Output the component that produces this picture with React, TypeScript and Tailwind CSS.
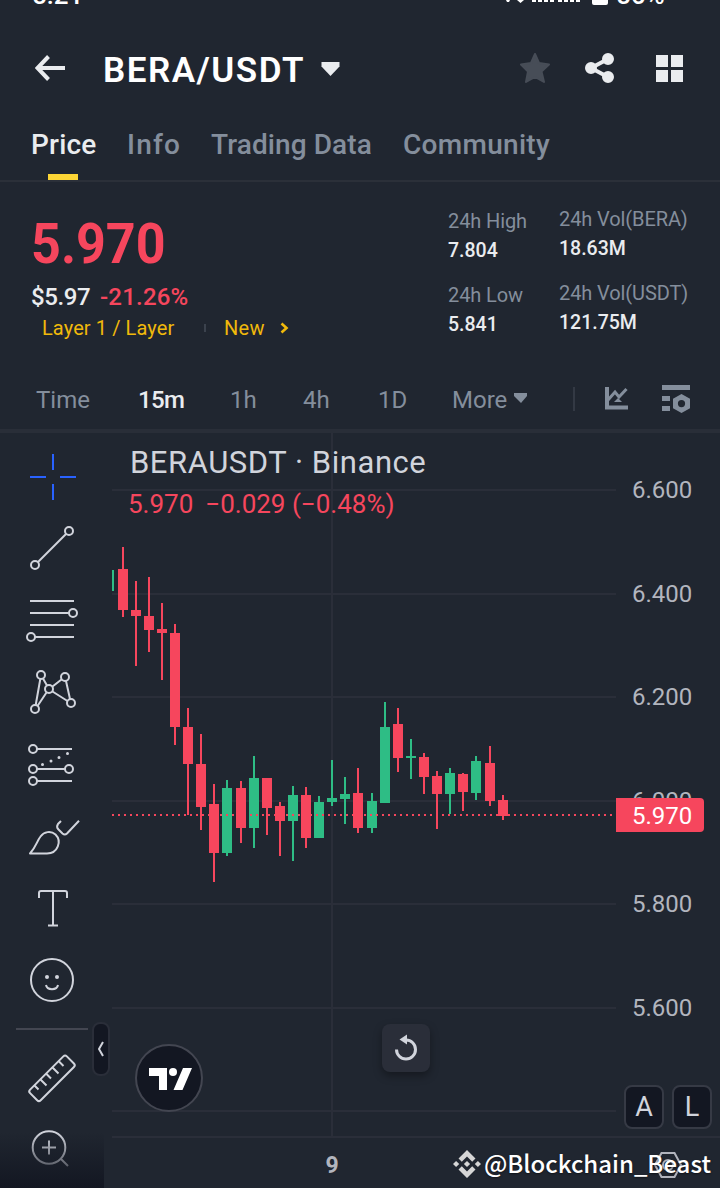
import type { ReactNode } from 'react';

type Candle = [x: number, high: number, open: number, close: number, low: number, up: boolean];

const RED = '#f6465d';
const GREEN = '#2ebd85';

// x centre, wick top, body top, body bottom, wick bottom, rising
const CANDLES: Candle[] = [
  [123, 547, 569, 610, 617, false],
  [136, 581, 610, 616, 666, false],
  [149, 577, 616, 630, 652, false],
  [162, 603, 629, 633, 680, false],
  [175, 624, 633, 727, 745, false],
  [188, 708, 727, 764, 815, false],
  [201, 734, 764, 807, 830, false],
  [214, 784, 804, 853, 882, false],
  [227, 780, 788, 853, 856, true],
  [241, 781, 788, 828, 843, false],
  [254, 756, 778, 828, 848, true],
  [267, 778, 778, 808, 835, false],
  [280, 802, 806, 821, 856, false],
  [293, 786, 795, 821, 861, true],
  [306, 787, 795, 838, 848, false],
  [319, 796, 802, 838, 838, true],
  [332, 760, 798, 802, 806, true],
  [345, 777, 794, 799, 824, true],
  [358, 768, 793, 828, 833, false],
  [372, 793, 801, 828, 833, true],
  [385, 702, 727, 803, 803, true],
  [398, 708, 724, 758, 772, false],
  [411, 739, 756, 758, 779, true],
  [424, 753, 757, 777, 794, false],
  [437, 771, 776, 794, 829, false],
  [450, 768, 773, 794, 814, true],
  [463, 773, 774, 792, 811, false],
  [476, 756, 761, 793, 800, true],
  [490, 746, 763, 801, 806, false],
  [503, 795, 800, 816, 820, false],
];

const GRID = [489, 593, 696, 800, 903, 1007, 1110];
const PRICES = ['6.600', '6.400', '6.200', '6.000', '5.800', '5.600'];

function Tool({ children }: { children: ReactNode }) {
  return (
    <svg width="72" height="72" viewBox="0 0 72 72" fill="none" stroke="#d1d4dc" strokeWidth="2" className="shrink-0">
      {children}
    </svg>
  );
}

function StatusBar() {
  return (
    <div className="h-3 overflow-hidden flex justify-between pl-8 pr-[53px] text-white font-medium">
      <span className="text-[26px] leading-none -mt-[18px]">5:21</span>
      <div className="flex">
        <svg width="110" height="12" viewBox="0 0 110 12" fill="#fff">
          <path d="M0 0h4l-1 2h-2zM11 0h7l-3.5 3z" />
          <path d="M26 0h4v2h-4zM32 0h4v2h-4zM38 0h4v2h-4zM44 0h4v2h-4zM52 0h4v2h-4zM58 0h4v2h-4zM64 0h4v2h-4zM70 0h4v2h-4z" />
          <path d="M86 0h16v3a2 2 0 0 1-2 2h-12a2 2 0 0 1-2-2z" />
        </svg>
        <span className="w-[51px] text-[26px] leading-none -mt-[18px]">56%</span>
      </div>
    </div>
  );
}

function Header() {
  return (
    <div className="h-[114px] flex items-center pl-[35px] pr-9 pb-0.5">
      <svg width="30" height="26" viewBox="0 0 30 26" fill="none" stroke="#eaecef" strokeWidth="4">
        <path d="M30 13H3M13.500 1.500L2.500 13l11 11.500" />
      </svg>
      <h1 className="ml-[38px] mt-[5px] w-[202px] text-white font-semibold text-[35px] leading-none tracking-[1.5px] whitespace-nowrap">BERA/USDT</h1>
      <svg className="ml-[16px] mt-px" width="19" height="14" viewBox="0 0 18 14" fill="#eaecef">
        <path d="M0 0h18v4.500L9 14 0 4.500z" />
      </svg>
      <svg className="ml-auto" width="30" height="30" viewBox="0 0 30 30" fill="#474d57" stroke="#474d57" strokeWidth="2" strokeLinejoin="round">
        <path d="M15 1l4 9 10 1.500-7.500 7L24 29l-9-5-9 5 2-10.500L1 11.500 11 10z" />
      </svg>
      <svg className="ml-[35px]" width="30" height="30" viewBox="0 0 30 30" fill="#eaecef" stroke="#eaecef" strokeWidth="4">
        <path d="M23 6L6 15l17 9" fill="none" />
        <circle cx="23" cy="6" r="4" />
        <circle cx="6" cy="15" r="4" />
        <circle cx="23" cy="24" r="4" />
      </svg>
      <div className="ml-[41px] mr-px grid grid-cols-2 gap-[3px]">
        <i className="size-3 bg-[#eaecef]" />
        <i className="size-3 bg-[#eaecef]" />
        <i className="size-3 bg-[#eaecef]" />
        <i className="size-3 bg-[#eaecef]" />
      </div>
    </div>
  );
}

function Tabs() {
  return (
    <nav className="h-14 pl-[31px] flex border-b-2 border-[#2b3039] text-[28px] leading-[38px] text-[#848e9c] font-medium whitespace-nowrap">
      <div className="w-24 flex flex-col text-[#eaecef]">
        <span className="tracking-[0.2px]">Price</span>
        <i className="mt-auto ml-[17px] w-[30px] h-1.5 bg-[#fcd535]" />
      </div>
      <span className="w-[84px] tracking-[1.2px]">Info</span>
      <span className="w-48 tracking-[0.1px]">Trading Data</span>
      <span className="tracking-[0.3px]">Community</span>
    </nav>
  );
}

function Stat({ label, value }: { label: string; value: string }) {
  return (
    <div className="h-[74px] whitespace-nowrap">
      <div className="text-[20px] leading-[29px] text-[#848e9c] tracking-[-0.1px]">{label}</div>
      <div className="text-[19.5px] leading-[29px] text-[#eaecef] font-medium">{value}</div>
    </div>
  );
}

function Summary() {
  return (
    <section className="h-[190px] flex pl-[31px]">
      <div className="w-[417px] pt-[30px] whitespace-nowrap">
        <div className="h-[69px] w-fit origin-left scale-x-[0.93] text-[56px] leading-[64px] text-[#f6465d] font-bold">5.970</div>
        <div className="h-8 flex items-center text-[24px] font-medium">
          <span className="w-[69px] text-[#eaecef] tracking-[-0.4px]">$5.97</span>
          <span className="text-[#f6465d] tracking-[0.2px]">-21.26%</span>
        </div>
        <div className="h-[30px] flex items-center pl-[11px] text-[20px] text-[#f0b90b]">
          <span className="w-[162px] tracking-[0.1px]">Layer 1 / Layer</span>
          <i className="w-0.5 h-2 bg-[#3b424d]" />
          <span className="ml-[18px] w-[56px] tracking-[0.3px]">New</span>
          <svg width="9" height="12" viewBox="0 0 9 12" fill="none" stroke="#f0b90b" strokeWidth="2.600">
            <path d="M1.500 1.500L6.500 6l-5 4.500" />
          </svg>
        </div>
      </div>
      <div className="w-[111px] pt-[25px]">
        <Stat label="24h High" value="7.804" />
        <Stat label="24h Low" value="5.841" />
      </div>
      <div className="pt-[23px]">
        <Stat label="24h Vol(BERA)" value="18.63M" />
        <Stat label="24h Vol(USDT)" value="121.75M" />
      </div>
    </section>
  );
}

function Intervals() {
  return (
    <div className="h-[61px] pl-9 pb-0.5 flex items-center border-b-4 border-[#292e38] text-[24px] text-[#848e9c] whitespace-nowrap">
      <span className="w-[102px]">Time</span>
      <span className="w-[92px] text-[#eaecef] font-medium tracking-[-0.6px]">15m</span>
      <span className="w-[73px]">1h</span>
      <span className="w-[75px]">4h</span>
      <span className="w-[74px]">1D</span>
      <span className="w-[62px]">More</span>
      <svg width="14" height="10" viewBox="0 0 14 10" fill="#848e9c" className="-mt-1">
        <path d="M1 0h12v3L7 10 0 3V0z" />
      </svg>
      <i className="ml-[45px] w-0.5 h-6 -mt-0.5 bg-[#333944]" />
      <svg className="ml-[30px] -mt-0.5" width="23" height="23" viewBox="0 0 23 23" fill="none" stroke="#848e9c">
        <path d="M2 0v20.500h21" strokeWidth="4" />
        <path d="M3 13L10 5l4 5 7.500-8" strokeWidth="3" />
        <path d="M9 15l4-4 4 4z" fill="#848e9c" stroke="none" />
      </svg>
      <svg className="ml-[34px]" width="28" height="29" viewBox="0 0 28 29" fill="#848e9c">
        <path d="M0 0h28v5H0zM0 11h8v5H0zM0 21h8v5H0z" />
        <path fillRule="evenodd" d="M19.500 9l8.500 4.800v9.500L19.500 28 11 23.300v-9.500zM19.500 15a3.600 3.600 0 1 0 0 7.200 3.600 3.600 0 0 0 0-7.200z" />
      </svg>
    </div>
  );
}

function Toolbar() {
  return (
    <aside className="relative w-28 shrink-0">
      <div className="w-[104px] h-full pt-2 flex flex-col items-center">
        <svg width="72" height="72" viewBox="0 0 72 72" stroke="#2962ff" strokeWidth="2" className="shrink-0">
          <path d="M37 13v16M37 43v16M14 36h16M44 36h16" />
        </svg>
        <Tool>
          <path d="M22 49l28-28" />
          <circle cx="53" cy="18" r="4" />
          <circle cx="19" cy="52" r="4" />
        </Tool>
        <Tool>
          <path d="M14 16h44M14 28h39M14 40h44M19 52h39" />
          <circle cx="57" cy="28" r="4" />
          <circle cx="15" cy="52" r="4" />
        </Tool>
        <Tool>
          <path d="M24.300 22l-4.600 26M27 21.500l4 7M30.500 35.500L21.500 49M36.500 29.500l9-7M50 24l4 18M36.500 34.500l15 9.500" />
          <circle cx="25" cy="18" r="4" />
          <circle cx="49" cy="20" r="4" />
          <circle cx="33" cy="32" r="4" />
          <circle cx="55" cy="46" r="4" />
          <circle cx="19" cy="52" r="4" />
        </Tool>
        <Tool>
          <path d="M21 20h35M21 40h28M21 52h35" />
          <circle cx="17" cy="20" r="4" />
          <circle cx="17" cy="40" r="4" />
          <circle cx="17" cy="52" r="4" />
          <circle cx="53" cy="40" r="4" />
          <path d="M26.500 35.500v.01M35 32v.01M43 28.500v.01M51.500 24.500v.01" strokeWidth="3" strokeLinecap="round" />
        </Tool>
        <Tool>
          <path d="M14 52.500C20 46 21 40 24.500 35.500C28 30.500 35 29.500 39.500 33.500C46 40 42 52.500 31 52.500Z" strokeLinejoin="round" />
          <path d="M45 20l-3 3q-2 3 .5 5.500l4 4q2.300 2 4.500 0L63 19.700" />
        </Tool>
        <Tool>
          <path d="M23 25v-5q0-2 2-2h24q2 0 2 2v5M37 18v34M32 52.500h10" />
        </Tool>
        <Tool>
          <circle cx="36" cy="35" r="21" />
          <path d="M30 40c1 5.500 11 5.500 12 0" />
          <circle cx="31" cy="32" r="2" fill="#d1d4dc" stroke="none" />
          <circle cx="41" cy="32" r="2" fill="#d1d4dc" stroke="none" />
        </Tool>
        <div className="h-6 w-[72px] shrink-0 flex items-center">
          <i className="h-0.5 w-full bg-[#434651]" />
        </div>
        <Tool>
          <rect x="-26" y="-7.500" width="52" height="15" rx="2.500" transform="translate(36 37.300) rotate(-45)" />
          <path d="M18 44l4.500 4.500M24 38l6.500 6.500M30 32.500l5 5M36 26l6.500 6.500M42.500 20l5 5" />
        </Tool>
        <Tool>
          <circle cx="33" cy="34.500" r="16.300" />
          <path d="M33 27.500v14M26 34.500h14M45 46l7 7" />
        </Tool>
      </div>
      <div className="absolute left-0 bottom-0 w-[104px] h-14 bg-gradient-to-b from-[#131722]/0 to-[#131722]" />
      <button className="absolute left-[92px] top-[589px] z-10 w-[18px] h-[54px] rounded-lg border-2 border-[#2a2e39] bg-[#131722] flex items-center justify-center">
        <svg width="6" height="16" viewBox="0 0 6 16" fill="none" stroke="#d1d4dc" strokeWidth="2">
          <path d="M5 1L1 8l4 7" />
        </svg>
      </button>
    </aside>
  );
}

function Plot() {
  return (
    <svg width="504" height="703" viewBox="112 433 504 703" shapeRendering="crispEdges" className="shrink-0">
      {GRID.map((y) => <rect key={y} x="112" y={y} width="504" height="2" fill="#2a2e39" />)}
      <rect x="331" y="433" width="2" height="703" fill="#2a2e39" />
      <rect x="112" y="570" width="2" height="21" fill={GREEN} />
      {CANDLES.map(([x, top, a, b, bottom, up]) => (
        <g key={x} fill={up ? GREEN : RED}>
          <rect x={x - 1} y={top} width="2" height={bottom - top} />
          <rect x={x - 5} y={a} width="10" height={b - a} />
        </g>
      ))}
      <path d="M112 815H616" stroke={RED} strokeWidth="2" strokeDasharray="2 4" />
    </svg>
  );
}

function Chart() {
  return (
    <div className="relative w-[608px] flex flex-col font-[Roboto,sans-serif]">
      <div className="flex">
        <Plot />
        <div className="relative w-[104px] pt-[5.5px]">
          {PRICES.map((p) => (
            <div key={p} className="h-[103.5px] pl-4 flex items-center text-[24px] text-[#b2b5be]">{p}</div>
          ))}
          <div className="absolute left-0 top-[365px] w-[88px] h-[34px] pl-4 pt-0.5 flex items-center rounded-r bg-[#f6465d] text-[24px] text-white">5.970</div>
          <div className="flex gap-2 pt-[25px] pl-2 text-[27px] text-[#d1d4dc]">
            <button className="w-10 h-11 rounded-lg border-2 border-[#363a45] bg-[#131722]">A</button>
            <button className="w-10 h-11 rounded-lg border-2 border-[#363a45] bg-[#131722]">L</button>
          </div>
        </div>
      </div>
      <div className="h-[52px] flex items-center border-t-2 border-[#2a2e39] text-[#b2b5be]">
        <span className="w-[440px] text-center text-[23px] font-bold pt-1.5">9</span>
        <svg className="ml-[102px] mt-1" width="28" height="28" viewBox="0 0 28 28" fill="none" stroke="#b2b5be" strokeWidth="2">
          <path d="M7.500 2h13L27 14l-6.500 12h-13L1 14z" />
          <circle cx="14" cy="14" r="5" />
        </svg>
      </div>

      {/* Legend */}
      <div className="absolute left-[16px] top-[9px] whitespace-nowrap">
        <div className="pl-0.5 h-[42px] leading-[42px] text-[31px] tracking-[0.55px] text-[#d1d4dc]">BERAUSDT · Binance</div>
        <div className="h-[40px] leading-[40px] text-[26px] text-[#f6465d] flex gap-3">
          <span>5.970</span>
          <span>−0.029 (−0.48%)</span>
        </div>
      </div>

      <div className="absolute left-[23px] top-[611px] size-[68px] pt-0.5 pl-0.5 rounded-full border-2 border-[#434651] bg-[#131722] flex items-center justify-center">
        <svg width="43" height="22" viewBox="0 0 43 22" fill="#fff">
          <path d="M0 0h18v22h-8V8H0zM34 0h9l-9.500 22h-9z" />
          <circle cx="24" cy="4" r="4" />
        </svg>
      </div>

      <button className="absolute left-[270px] top-[591px] size-12 rounded-lg bg-[#2a2e39] shadow-[0_4px_8px_rgba(0,0,0,0.35)] flex items-center justify-center">
        <svg width="24" height="28" viewBox="0 0 24 28" fill="none" stroke="#d1d4dc" strokeWidth="3">
          <path d="M2.500 15.500A9.500 9.500 0 1 0 12 6" />
          <path d="M13 .5v10L5.500 5.500z" fill="#d1d4dc" stroke="none" />
        </svg>
      </button>

      <div className="absolute right-2 bottom-[6px] h-9 flex items-center text-white whitespace-nowrap font-['Noto_Sans_CJK_SC',sans-serif]">
        <svg width="28" height="28" viewBox="0 0 28 28" fill="#d6d6d6">
          <path d="M14 0l8.500 8.500-3.300 3.300L14 6.600l-5.200 5.200-3.300-3.300zM14 28l8.500-8.500-3.300-3.300L14 21.400l-5.200-5.200-3.300 3.300zM14 10.900l3.100 3.100-3.100 3.100-3.100-3.100zM3.100 10.900L6.200 14l-3.100 3.100L0 14zM24.900 10.900L28 14l-3.100 3.100-3.100-3.100z" />
        </svg>
        <span className="ml-[3px] pb-[3px] w-[228px] text-[24px] leading-none font-medium [text-shadow:0_1px_2px_rgba(0,0,0,0.5)]">@Blockchain_Beast</span>
      </div>
    </div>
  );
}

export default function App() {
  return (
    <main className="w-[720px] h-[1188px] overflow-hidden bg-[#202630] font-[Roboto,sans-serif]">
      <StatusBar />
      <Header />
      <Tabs />
      <Summary />
      <Intervals />
      <div className="flex h-[755px]">
        <Toolbar />
        <Chart />
      </div>
    </main>
  );
}
